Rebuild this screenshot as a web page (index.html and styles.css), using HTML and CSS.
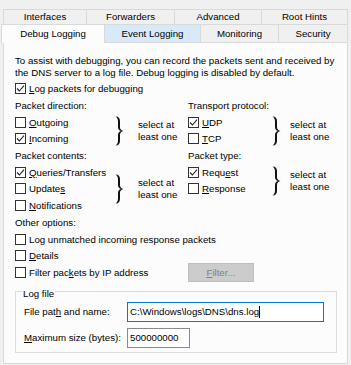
FILE: index.html
```html
<!DOCTYPE html>
<html>
<head>
<meta charset="utf-8">
<title>Debug Logging</title>
<link rel="stylesheet" href="styles.css">
</head>
<body>
<div class="dialog">
  <div class="tabrow back">
    <div class="tab t1">Interfaces</div>
    <div class="tab t2">Forwarders</div>
    <div class="tab t3">Advanced</div>
    <div class="tab t4 last">Root Hints</div>
  </div>
  <div class="tabrow front">
    <div class="tab selected">Debug Logging</div>
    <div class="tab hover">Event Logging</div>
    <div class="tab mon">Monitoring</div>
    <div class="tab sec last">Security</div>
  </div>
  <div class="panel">
    <p class="intro">To assist with debugging, you can record the packets sent and received by the DNS server to a log file. Debug logging is disabled by default.</p>
    <div class="row"><span class="cb on"><svg viewBox="0 0 9 9"><polyline points="1,4.5 3.4,7 8,1.6"/></svg></span><span><u>L</u>og packets for debugging</span></div>

    <div class="cols">
      <div class="col left">
        <div class="row">Packet direction:</div>
        <div class="group">
          <div class="items">
            <div class="row"><span class="cb"></span><span><u>O</u>utgoing</span></div>
            <div class="row"><span class="cb on"><svg viewBox="0 0 9 9"><polyline points="1,4.5 3.4,7 8,1.6"/></svg></span><span><u>I</u>ncoming</span></div>
          </div>
          <div class="note">
            <svg class="brace" viewBox="0 0 9 30"><path d="M0.5,0.5 C3.5,0.5 5,2 5,5.5 L5,11 C5,13 6,14.5 8.5,15 C6,15.5 5,17 5,19 L5,24.5 C5,28 3.5,29.5 0.5,29.5 C2,28.5 3,27 3,24.5 L3,19 C3,17 4,15.5 6,15 C4,14.5 3,13 3,11 L3,5.5 C3,3 2,1.5 0.5,0.5 Z"/></svg>
            <span class="notetext">select at<br>least one</span>
          </div>
        </div>
        <div class="row">Packet contents:</div>
        <div class="group">
          <div class="items">
            <div class="row"><span class="cb on"><svg viewBox="0 0 9 9"><polyline points="1,4.5 3.4,7 8,1.6"/></svg></span><span><u>Q</u>ueries/Transfers</span></div>
            <div class="row"><span class="cb"></span><span>Update<u>s</u></span></div>
            <div class="row"><span class="cb"></span><span><u>N</u>otifications</span></div>
          </div>
          <div class="note">
            <svg class="brace" viewBox="0 0 9 30"><path d="M0.5,0.5 C3.5,0.5 5,2 5,5.5 L5,11 C5,13 6,14.5 8.5,15 C6,15.5 5,17 5,19 L5,24.5 C5,28 3.5,29.5 0.5,29.5 C2,28.5 3,27 3,24.5 L3,19 C3,17 4,15.5 6,15 C4,14.5 3,13 3,11 L3,5.5 C3,3 2,1.5 0.5,0.5 Z"/></svg>
            <span class="notetext">select at<br>least one</span>
          </div>
        </div>
      </div>
      <div class="col right">
        <div class="row">Transport protocol:</div>
        <div class="group">
          <div class="items">
            <div class="row"><span class="cb on"><svg viewBox="0 0 9 9"><polyline points="1,4.5 3.4,7 8,1.6"/></svg></span><span><u>U</u>DP</span></div>
            <div class="row"><span class="cb"></span><span><u>T</u>CP</span></div>
          </div>
          <div class="note">
            <svg class="brace" viewBox="0 0 9 30"><path d="M0.5,0.5 C3.5,0.5 5,2 5,5.5 L5,11 C5,13 6,14.5 8.5,15 C6,15.5 5,17 5,19 L5,24.5 C5,28 3.5,29.5 0.5,29.5 C2,28.5 3,27 3,24.5 L3,19 C3,17 4,15.5 6,15 C4,14.5 3,13 3,11 L3,5.5 C3,3 2,1.5 0.5,0.5 Z"/></svg>
            <span class="notetext">select at<br>least one</span>
          </div>
        </div>
        <div class="row">Packet type:</div>
        <div class="group">
          <div class="items">
            <div class="row"><span class="cb on"><svg viewBox="0 0 9 9"><polyline points="1,4.5 3.4,7 8,1.6"/></svg></span><span>Requ<u>e</u>st</span></div>
            <div class="row"><span class="cb"></span><span><u>R</u>esponse</span></div>
          </div>
          <div class="note">
            <svg class="brace" viewBox="0 0 9 30"><path d="M0.5,0.5 C3.5,0.5 5,2 5,5.5 L5,11 C5,13 6,14.5 8.5,15 C6,15.5 5,17 5,19 L5,24.5 C5,28 3.5,29.5 0.5,29.5 C2,28.5 3,27 3,24.5 L3,19 C3,17 4,15.5 6,15 C4,14.5 3,13 3,11 L3,5.5 C3,3 2,1.5 0.5,0.5 Z"/></svg>
            <span class="notetext">select at<br>least one</span>
          </div>
        </div>
      </div>
    </div>

    <div class="row">Other options:</div>
    <div class="row"><span class="cb"></span><span>Log unmatched incoming response packets</span></div>
    <div class="row"><span class="cb"></span><span><u>D</u>etails</span></div>
    <div class="row filterrow">
      <div class="filterlabel"><span class="cb"></span><span>Filter pac<u>k</u>ets by IP address</span></div>
      <div class="btn disabled"><u>F</u>ilter...</div>
    </div>

    <fieldset class="groupbox">
      <legend>Log file</legend>
      <div class="frow">
        <span class="flabel">File pat<u>h</u> and name:</span>
        <div class="textbox focused">C:\Windows\logs\DNS\dns.log<span class="caret"></span></div>
      </div>
      <div class="frow">
        <span class="flabel"><u>M</u>aximum size (bytes):</span>
        <div class="textbox small">500000000</div>
      </div>
    </fieldset>
  </div>
</div>
</body>
</html>
```
FILE: styles.css
```css
html, body {
  margin: 0;
  padding: 0;
  background: #f0f0f0;
  overflow: hidden;
}
body {
  font-family: "Liberation Sans", Arial, sans-serif;
  font-size: 9.7px;
  color: #000;
  width: 351px;
  height: 365px;
}
u {
  text-decoration: underline;
  text-underline-offset: 1px;
}
.dialog {
  padding-top: 9px;
}
.tabrow {
  display: flex;
}
.tab {
  box-sizing: border-box;
  text-align: center;
  border-top: 1px solid #d9d9d9;
  border-left: 1px solid #d9d9d9;
  background: #f0f0f0;
  white-space: nowrap;
}
.tab.last {
  border-right: 1px solid #d9d9d9;
}
.back {
  margin-left: 3px;
  height: 15px;
}
.back .tab {
  height: 15px;
  line-height: 14px;
}
.t1 { width: 83px; }
.t2 { width: 88px; }
.t3 { width: 87px; }
.t4 { width: 87px; }
.front {
  margin-left: 1px;
  height: 18px;
}
.front .tab {
  height: 18px;
  line-height: 17px;
}
.front .tab.selected {
  width: 104px;
  height: 19px;
  border-right: 1px solid #d9d9d9;
  background: #fbfcfb;
  position: relative;
  z-index: 1;
}
.front .tab.hover {
  width: 95px;
  border-left: none;
  background: #d8eaf9;
}
.front .tab.mon { width: 78px; }
.front .tab.sec { width: 70px; }

.panel {
  box-sizing: border-box;
  margin-left: 3px;
  width: 345px;
  height: 322px;
  border: 1px solid #d9d9d9;
  background: #fbfcfb;
  padding: 12px 10px 0 11px;
}
.intro {
  margin: 0 0 2.5px 0;
  line-height: 11.5px;
}
.row {
  display: flex;
  align-items: center;
  height: 16.7px;
  white-space: nowrap;
}
.cb {
  box-sizing: border-box;
  width: 11px;
  height: 11px;
  border: 1px solid #333;
  background: #fff;
  margin-right: 3px;
  flex: none;
  display: flex;
}
.cb svg {
  width: 9px;
  height: 9px;
}
.cb polyline {
  fill: none;
  stroke: #222;
  stroke-width: 1.1;
}
.cols {
  display: flex;
}
.col.left {
  width: 173px;
}
.col.right {
  flex: 1;
}
.group {
  display: flex;
}
.left .items {
  width: 100px;
}
.right .items {
  width: 84px;
}
.note {
  display: flex;
  align-items: center;
}
.brace {
  width: 9px;
  height: 30px;
  fill: #111;
  flex: none;
}
.notetext {
  line-height: 11.5px;
  white-space: nowrap;
}
.left .notetext {
  margin-left: 14px;
}
.right .notetext {
  margin-left: 9px;
}
.filterlabel {
  display: flex;
  align-items: center;
  width: 173px;
}
.btn {
  box-sizing: border-box;
  width: 66px;
  height: 19px;
  line-height: 17px;
  text-align: center;
  flex: none;
}
.btn.disabled {
  background: #cccccc;
  border: 1px solid #bfbfbf;
  color: #838383;
}
.groupbox {
  box-sizing: border-box;
  width: 322px;
  margin: 3.3px 0 0 0;
  padding: 0 10px 4px 8px;
  border: 1px solid #dcdcdc;
  min-width: 0;
}
.groupbox legend {
  margin-left: -2px;
  padding: 4px 1px 0 1px;
  line-height: 11.5px;
}
.frow {
  display: flex;
  align-items: center;
  height: 20px;
  margin-top: 2.25px;
}
.frow + .frow {
  margin-top: 6px;
}
.flabel {
  width: 103px;
  flex: none;
  white-space: nowrap;
}
.textbox {
  box-sizing: border-box;
  height: 20px;
  line-height: 18px;
  padding-left: 2px;
  background: #fff;
  border: 1px solid #8a8a8a;
  white-space: nowrap;
}
.textbox.focused {
  width: 197px;
  border-color: #0078d7;
}
.textbox.small {
  width: 63px;
}
.caret {
  display: inline-block;
  width: 1px;
  height: 12px;
  background: #000;
  vertical-align: middle;
  margin-left: 0;
}
```
